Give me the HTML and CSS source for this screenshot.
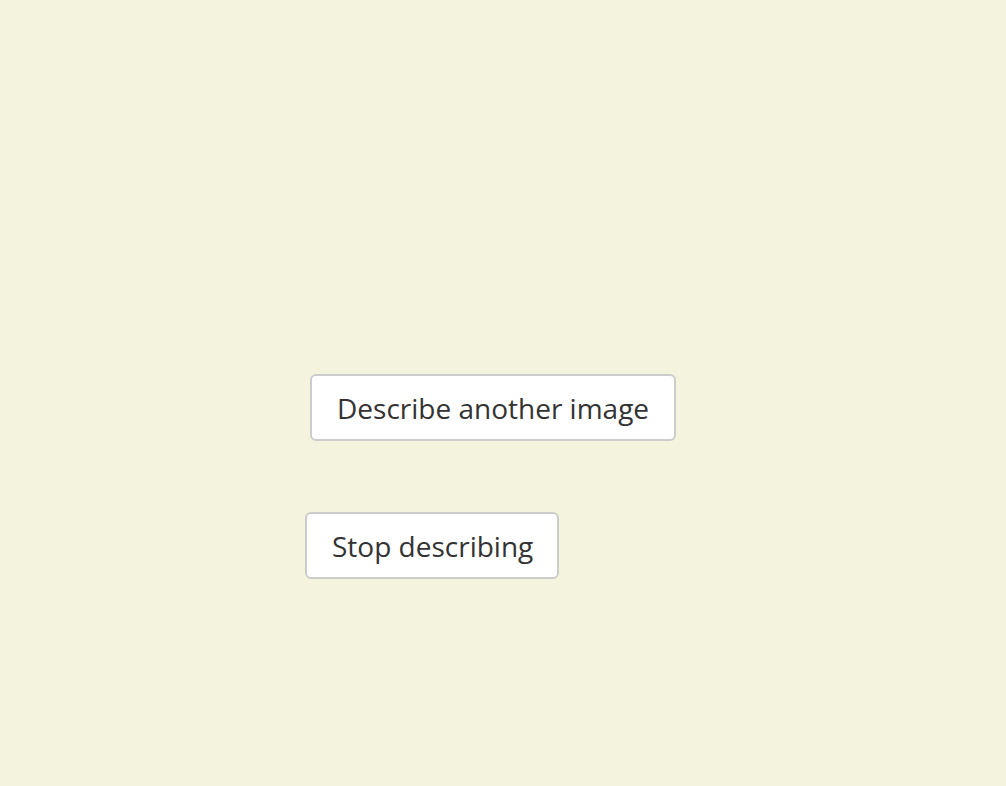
FILE: index.html
```html
<!DOCTYPE html>
<html>
<head>
<meta charset="utf-8">
<link rel="stylesheet" href="styles.css">
</head>
<body>
<main class="page">
  <button class="btn btn-another">Describe another image</button>
  <button class="btn btn-stop">Stop describing</button>
</main>
</body>
</html>
```

FILE: styles.css
```css
html, body {
  margin: 0;
  padding: 0;
  background: #f4f3dd;
  height: 100%;
}
.page {
  display: flex;
  flex-direction: column;
  align-items: flex-start;
  padding-top: 374px;
}
.btn {
  font-family: "Open Sans", "Liberation Sans", sans-serif;
  font-size: 28px;
  color: #333333;
  background: #ffffff;
  border: 2px solid #cccccc;
  border-radius: 6px;
  height: 67px;
  padding: 0 25px;
  box-sizing: border-box;
  cursor: pointer;
}
.btn-another {
  margin-left: 310px;
}
.btn-stop {
  margin-left: 305px;
  margin-top: 71px;
  padding: 0 24px 0 25px;
}
```
